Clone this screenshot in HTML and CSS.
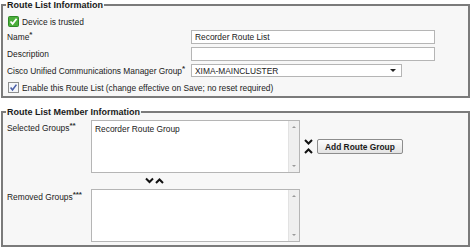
FILE: index.html
```html
<!DOCTYPE html>
<html lang="en">

<head>
    <meta charset="UTF-8">
    <meta name="viewport" content="width=device-width, initial-scale=1.0">
    <title>Route List Configuration</title>
    <link rel="stylesheet" href="styles.css">
</head>

<body>

    <fieldset class="panel panel-info">
        <legend>Route List Information</legend>
        <div class="check-row">
            <svg class="trusted-icon" width="11" height="11" viewBox="0 0 11 11">
                <rect x="0.5" y="0.5" width="10" height="10" rx="1" fill="#4caf3c" stroke="#2f8a28"/>
                <polyline points="2.5,5.5 4.6,7.8 8.6,2.8" fill="none" stroke="#fff" stroke-width="1.8"/>
            </svg>
            <span>Device is trusted</span>
        </div>
        <div class="form-grid">
            <label for="name">Name<sup>*</sup></label>
            <input type="text" id="name" class="text-input" value="Recorder Route List">
            <label for="description">Description</label>
            <input type="text" id="description" class="text-input">
            <label for="cmGroup">Cisco Unified Communications Manager Group<sup>*</sup></label>
            <div class="select-box" id="cmGroup">
                <span>XIMA-MAINCLUSTER</span>
                <span class="select-caret"></span>
            </div>
        </div>
        <div class="check-row enable-row">
            <svg class="check-box" width="11" height="11" viewBox="0 0 11 11">
                <rect x="0.5" y="0.5" width="10" height="10" fill="#f4f6fa" stroke="#8e8f8f"/>
                <polyline points="2.6,5.6 4.5,8 8.4,2.6" fill="none" stroke="#4a5fa8" stroke-width="1.6"/>
            </svg>
            <span>Enable this Route List (change effective on Save; no reset required)</span>
        </div>
    </fieldset>

    <fieldset class="panel panel-members">
        <legend>Route List Member Information</legend>
        <div class="member-grid">
            <div class="member-label">Selected Groups<sup>**</sup></div>
            <div class="list-row">
                <div class="list-box">
                    <div class="list-items">Recorder Route Group</div>
                    <div class="scroll-bar">
                        <span class="scroll-up"></span>
                        <span class="scroll-down"></span>
                    </div>
                </div>
                <div class="order-arrows">
                    <svg width="9" height="18" viewBox="0 0 9 18">
                        <polyline points="1,2 4.5,5.5 8,2" fill="none" stroke="#111" stroke-width="2"/>
                        <polyline points="1,15 4.5,11.5 8,15" fill="none" stroke="#111" stroke-width="2"/>
                    </svg>
                </div>
                <button type="button" class="add-btn">Add Route Group</button>
            </div>

            <div></div>
            <div class="move-arrows">
                <svg width="20" height="8" viewBox="0 0 20 8">
                    <polyline points="1,1.5 4.5,5 8,1.5" fill="none" stroke="#111" stroke-width="2"/>
                    <polyline points="11,6 14.5,2.5 18,6" fill="none" stroke="#111" stroke-width="2"/>
                </svg>
            </div>

            <div class="member-label">Removed Groups<sup>***</sup></div>
            <div class="list-row">
                <div class="list-box list-removed">
                    <div class="list-items"></div>
                    <div class="scroll-bar">
                        <span class="scroll-up"></span>
                        <span class="scroll-down"></span>
                    </div>
                </div>
            </div>
        </div>
    </fieldset>

</body>

</html>
```

FILE: styles.css
```css
:root {
    --panel-bg: #f7f7f7;
    --border-color: #7b7b7b;
    --field-border: #b5b5b5;
    --text-color: #222;
}

body {
    margin: 0;
    background-color: #fff;
    color: var(--text-color);
    font-family: "Liberation Sans", Arial, sans-serif;
    font-size: 8.4px;
}

.panel {
    margin: 0 4px 0 1px;
    padding: 5px 4px 2px 4px;
    border: 2px solid var(--border-color);
    background-color: var(--panel-bg);
}

.panel legend {
    padding: 0 1px;
    margin-left: -1px;
    font-weight: bold;
    font-size: 9px;
    color: #1a1a1a;
}

sup {
    font-size: 8px;
    font-weight: bold;
    line-height: 0;
    vertical-align: 3px;
    color: #333;
}

.check-row {
    display: flex;
    align-items: center;
    gap: 3px;
    height: 13px;
}

.trusted-icon {
    margin-left: 1px;
}

.enable-row {
    margin-top: 4px;
    padding-left: 1px;
}

.form-grid {
    display: grid;
    grid-template-columns: 184px auto;
    row-gap: 3px;
    margin-top: 2px;
    align-items: center;
    justify-items: start;
}

.text-input {
    width: 244px;
    height: 14px;
    box-sizing: border-box;
    padding: 0 3px;
    border: 1px solid var(--field-border);
    background-color: #fff;
    font-family: inherit;
    font-size: 8.4px;
    color: var(--text-color);
}

.select-box {
    width: 211px;
    height: 13px;
    box-sizing: border-box;
    display: flex;
    align-items: center;
    justify-content: space-between;
    padding: 0 5px 0 3px;
    border: 1px solid var(--field-border);
    background-color: #fff;
}

.select-caret {
    width: 0;
    height: 0;
    border-left: 3px solid transparent;
    border-right: 3px solid transparent;
    border-top: 3px solid #222;
}

.panel-members {
    margin-top: 9px;
    padding-top: 3px;
    padding-bottom: 3px;
}

.member-grid {
    display: grid;
    grid-template-columns: 84px auto;
    align-items: start;
}

.member-label {
    padding-top: 3px;
}

.list-row {
    display: flex;
    align-items: center;
}

.list-box {
    width: 209px;
    height: 53px;
    box-sizing: border-box;
    display: flex;
    border: 1px solid var(--field-border);
    background-color: #fff;
}

.list-items {
    flex: 1;
    padding: 3px 3px;
}

.scroll-bar {
    width: 10px;
    display: flex;
    flex-direction: column;
    justify-content: space-between;
    align-items: center;
    padding: 5px 0;
    background-color: #efefef;
    border-left: 1px solid #e2e2e2;
}

.scroll-up,
.scroll-down {
    width: 0;
    height: 0;
    border-left: 2px solid transparent;
    border-right: 2px solid transparent;
}

.scroll-up {
    border-bottom: 2px solid #9a9a9a;
}

.scroll-down {
    border-top: 2px solid #9a9a9a;
}

.order-arrows {
    display: flex;
    margin: 0 4px 0 4px;
}

.add-btn {
    height: 15px;
    padding: 0 7px;
    border: 1px solid #8d8d8d;
    border-radius: 2px;
    background: linear-gradient(#fdfdfd, #e3e3e3);
    font-family: inherit;
    font-size: 8.4px;
    font-weight: bold;
    color: #1a1a1a;
}

.move-arrows {
    display: flex;
    height: 16px;
    align-items: center;
    padding-left: 54px;
}

.list-removed {
    height: 53px;
}
```
